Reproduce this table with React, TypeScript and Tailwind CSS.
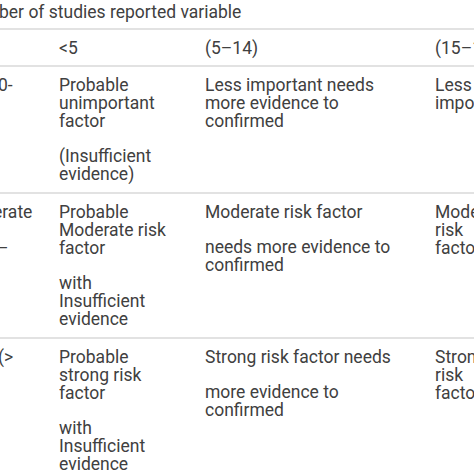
import React from 'react';

const rows = [
  {
    lead: [{ t: '0-', cls: '' }],
    cols: [
      ['Probable unimportant factor', '(Insufficient evidence)'],
      ['Less important needs more evidence to confirmed'],
      ['Less important'],
    ],
  },
  {
    lead: [
      { t: 'erate', cls: '-ml-[5px]' },
      { t: '\u00a0', cls: '' },
      { t: '–', cls: '-ml-[1px]' },
    ],
    cols: [
      ['Probable Moderate risk factor', 'with Insufficient evidence'],
      ['Moderate risk factor', 'needs more evidence to confirmed'],
      ['Moderate risk factor'],
    ],
  },
  {
    lead: [{ t: '(>', cls: '' }],
    cols: [
      ['Probable strong risk factor', 'with Insufficient evidence'],
      ['Strong risk factor needs', 'more evidence to confirmed'],
      ['Strong risk factor'],
    ],
  },
];

const widths = ['w-[115px]', 'w-[200px]', 'w-[78px]'];

const App = () => {
  return (
    <div
      className="w-[474px] h-screen overflow-hidden bg-white text-[#404040] text-[17.5px] leading-[18px]"
      style={{ fontFamily: 'Roboto, "Liberation Sans", sans-serif' }}
    >
      <div className="min-w-[640px]">
        {/* title row */}
        <div className="pt-[3px] h-[30px] border-b-2 border-[#e2e2e2]">
          <span className="-ml-[1px] whitespace-nowrap">ber of studies reported variable</span>
        </div>

        {/* header row */}
        <div className="grid grid-cols-[59px_146px_230px_1fr] pt-[9px] pb-[8px] border-b-2 border-[#e2e2e2]">
          <div></div>
          <div>&lt;5</div>
          <div>(5–14)</div>
          <div className="whitespace-nowrap">(15–19)</div>
        </div>

        {rows.map((row, i) => (
          <div
            key={i}
            className="grid grid-cols-[59px_146px_230px_1fr] pt-[9px] pb-[9px] border-b-2 border-[#e2e2e2]"
          >
            <div className="-ml-[2px] whitespace-nowrap">
              {row.lead.map((l, k) => (
                <div key={k} className={l.cls}>{l.t}</div>
              ))}
            </div>
            {row.cols.map((col, c) => (
              <div key={c} className={widths[c]}>
                {col.map((p, k) => (
                  <p key={k} className={k > 0 ? 'mt-[17px]' : ''}>
                    {p}
                  </p>
                ))}
              </div>
            ))}
          </div>
        ))}
      </div>
    </div>
  );
};

export default App;
